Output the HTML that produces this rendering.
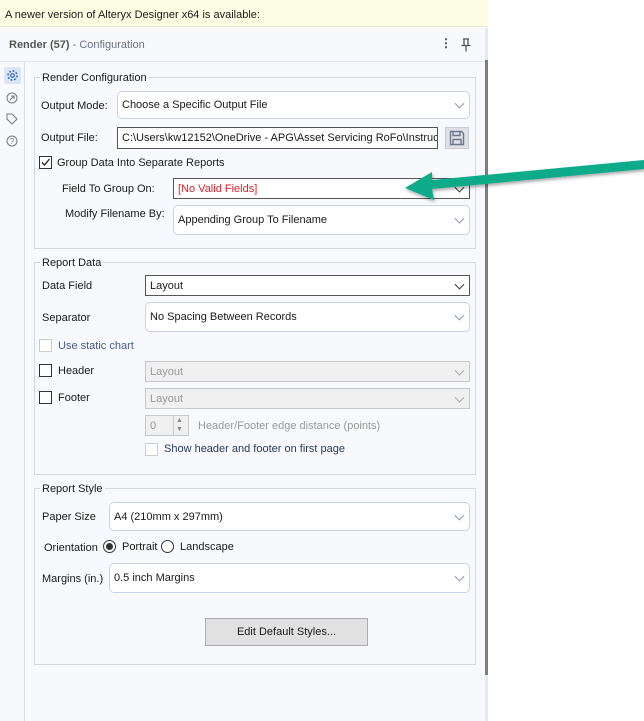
<!DOCTYPE html>
<html><head><style>
*{box-sizing:border-box;margin:0;padding:0}
body{width:644px;height:721px;overflow:hidden;background:#fff;font-family:"Liberation Sans",sans-serif;font-size:11px;color:#1a1a1a;position:relative}
.a{position:absolute}
.t{position:absolute;white-space:nowrap;line-height:14px}
.dd{position:absolute;background:#fff;border:1px solid #c9d2e6;border-radius:5px}
.dk{position:absolute;background:#fff;border:1px solid #555}
.dis{position:absolute;background:#f0f0f0;border:1px solid #c8c8c8}
.dd span,.dk span,.dis span{position:absolute;left:4px;top:50%;transform:translateY(-50%);white-space:nowrap}
.chev{position:absolute;right:6px;top:50%;width:7px;height:7px;border-right:1.3px solid #8a94b0;border-bottom:1.3px solid #8a94b0;transform:translateY(-70%) rotate(45deg)}
.dk .chev{border-color:#333}
.dis .chev{border-color:#aaa}
.grp{position:absolute;border:1px solid #d6d9de}
.lg{position:absolute;background:#f7f9fc;padding:0 2px;line-height:14px}
.cb{position:absolute;width:13px;height:13px;border:1px solid #333;background:#fff}
.cbd{border-color:#ccc}
</style></head><body>
<div class="a" style="left:0;top:0;width:488px;height:27px;background:#fdfde3;border-bottom:1px solid #ecebd0"></div>
<div class="t" style="left:5px;top:8px">A newer version of Alteryx Designer x64 is available:</div>
<div class="a" style="left:0;top:28px;width:485px;height:693px;background:#f7f9fc"></div>
<div class="a" style="left:0;top:61px;width:485px;height:1px;background:#e3e7ee"></div>
<div class="a" style="left:24px;top:62px;width:1px;height:659px;background:#d8dfee"></div>
<div class="a" style="left:485px;top:28px;width:3px;height:693px;background:#e3e8f2"></div>
<div class="a" style="left:485px;top:60px;width:3px;height:615px;background:#7d7d7d"></div>
<div class="t" style="left:9px;top:38px;font-size:11px;color:#555"><b style="color:#555">Render (57)</b> <span style="color:#6a7284">- Configuration</span></div>
<div class="t" style="left:440px;top:36px;font-weight:bold;color:#444;font-size:12px">⋮</div>
<svg class="a" style="left:460px;top:38px" width="12" height="14" viewBox="0 0 12 14"><path d="M3 1h6M4 1v6M8 1v6M1.5 7.5h9M6 7.5v6" stroke="#555" stroke-width="1.3" fill="none"/></svg>
<div class="a" style="left:4px;top:67px;width:17px;height:17px;background:#dde5f5;border-radius:2px"></div>
<svg class="a" style="left:6px;top:69px" width="13" height="13" viewBox="0 0 13 13"><circle cx="6.5" cy="6.5" r="4.5" fill="none" stroke="#2f6fd0" stroke-width="1.5" stroke-dasharray="2 1.5"/><circle cx="6.5" cy="6.5" r="1.8" fill="none" stroke="#2f6fd0" stroke-width="1.2"/></svg>
<svg class="a" style="left:6px;top:92px" width="12" height="12" viewBox="0 0 12 12"><circle cx="6" cy="6" r="5" fill="none" stroke="#777" stroke-width="1"/><path d="M4 8l4-4M5 4h3v3" stroke="#777" fill="none"/></svg>
<svg class="a" style="left:6px;top:113px" width="12" height="12" viewBox="0 0 12 12"><path d="M1 1h5l5 5-5 5-5-5z" fill="none" stroke="#777"/></svg>
<svg class="a" style="left:6px;top:135px" width="12" height="12" viewBox="0 0 12 12"><circle cx="6" cy="6" r="5" fill="none" stroke="#777"/><text x="6" y="9" font-size="8" text-anchor="middle" fill="#777" font-family="Liberation Sans">?</text></svg>

<!-- group 1 -->
<div class="grp" style="left:34px;top:77px;width:442px;height:172px"></div>
<div class="lg" style="left:40px;top:71px">Render Configuration</div>
<div class="t" style="left:41px;top:99px">Output Mode:</div>
<div class="dd" style="left:117px;top:91px;width:353px;height:28px"><span>Choose a Specific Output File</span><i class="chev"></i></div>
<div class="t" style="left:41px;top:131px">Output File:</div>
<div class="dk" style="left:117px;top:127px;width:321px;height:22px;overflow:hidden"><span>C:\Users\kw12152\OneDrive - APG\Asset Servicing RoFo\Instructions</span></div>
<div class="a" style="left:445px;top:127px;width:24px;height:22px;background:#dfe1e5;border:1px solid #c8ccd3"></div>
<svg class="a" style="left:449px;top:130px" width="16" height="16" viewBox="0 0 16 16"><path d="M1.5 1.5h11l2 2v11h-13z M4 1.5v4h7v-4 M4 14.5v-5h8v5" fill="none" stroke="#6b7890" stroke-width="1.4"/></svg>
<div class="cb" style="left:39px;top:156px"></div>
<svg class="a" style="left:40px;top:157px" width="11" height="11"><path d="M2 5.5l2.5 2.5 5-6" stroke="#222" stroke-width="1.3" fill="none"/></svg>
<div class="t" style="left:57px;top:156px">Group Data Into Separate Reports</div>
<div class="t" style="left:62px;top:182px">Field To Group On:</div>
<div class="dk" style="left:173px;top:178px;width:297px;height:21px"><span style="color:#e0202a">[No Valid Fields]</span><i class="chev"></i></div>
<div class="t" style="left:65px;top:207px">Modify Filename By:</div>
<div class="dd" style="left:173px;top:205px;width:297px;height:30px"><span>Appending Group To Filename</span><i class="chev"></i></div>

<!-- group 2 -->
<div class="grp" style="left:34px;top:262px;width:442px;height:213px"></div>
<div class="lg" style="left:40px;top:256px">Report Data</div>
<div class="t" style="left:42px;top:279px">Data Field</div>
<div class="dk" style="left:145px;top:275px;width:325px;height:21px"><span>Layout</span><i class="chev"></i></div>
<div class="t" style="left:42px;top:311px">Separator</div>
<div class="dd" style="left:145px;top:302px;width:325px;height:30px"><span>No Spacing Between Records</span><i class="chev"></i></div>
<div class="cb cbd" style="left:39px;top:339px"></div>
<div class="t" style="left:58px;top:339px;color:#4a5a8a">Use static chart</div>
<div class="cb" style="left:39px;top:364px"></div>
<div class="t" style="left:58px;top:364px">Header</div>
<div class="dis" style="left:145px;top:361px;width:325px;height:21px"><span style="color:#999">Layout</span><i class="chev"></i></div>
<div class="cb" style="left:39px;top:391px"></div>
<div class="t" style="left:58px;top:391px">Footer</div>
<div class="dis" style="left:145px;top:388px;width:325px;height:21px"><span style="color:#999">Layout</span><i class="chev"></i></div>
<div class="dis" style="left:145px;top:415px;width:44px;height:21px"><span style="color:#999">0</span></div>
<div class="a" style="left:173px;top:416px;width:1px;height:19px;background:#ccc"></div>
<div class="t" style="left:176px;top:414px;font-size:7px;color:#888">▲</div>
<div class="t" style="left:176px;top:423px;font-size:7px;color:#888">▼</div>
<div class="t" style="left:198px;top:419px;color:#999">Header/Footer edge distance (points)</div>
<div class="cb cbd" style="left:145px;top:443px"></div>
<div class="t" style="left:164px;top:442px;color:#2a3a5a">Show header and footer on first page</div>

<!-- group 3 -->
<div class="grp" style="left:34px;top:488px;width:442px;height:177px"></div>
<div class="lg" style="left:40px;top:482px">Report Style</div>
<div class="t" style="left:42px;top:510px">Paper Size</div>
<div class="dd" style="left:109px;top:502px;width:361px;height:29px"><span>A4 (210mm x 297mm)</span><i class="chev"></i></div>
<div class="t" style="left:44px;top:541px">Orientation</div>
<div class="a" style="left:103px;top:540px;width:13px;height:13px;border:1px solid #333;border-radius:50%;background:#fff"></div>
<div class="a" style="left:106px;top:543px;width:7px;height:7px;border-radius:50%;background:#333"></div>
<div class="t" style="left:122px;top:540px">Portrait</div>
<div class="a" style="left:161px;top:540px;width:13px;height:13px;border:1px solid #333;border-radius:50%;background:#fff"></div>
<div class="t" style="left:180px;top:540px">Landscape</div>
<div class="t" style="left:42px;top:572px">Margins (in.)</div>
<div class="dd" style="left:109px;top:563px;width:361px;height:30px"><span>0.5 inch Margins</span><i class="chev"></i></div>
<div class="a" style="left:205px;top:618px;width:163px;height:28px;background:#e1e1e1;border:1px solid #adadad"></div>
<div class="t" style="left:205px;top:625px;width:163px;text-align:center">Edit Default Styles...</div>

<!-- arrow -->
<svg class="a" style="left:0;top:0" width="644" height="721"><defs><filter id="s"><feDropShadow dx="1" dy="2" stdDeviation="1.5" flood-opacity="0.35"/></filter></defs>
<g filter="url(#s)" fill="#0aab8a"><path d="M644 160 L644 169 L432 189 L434 200 L405 188 L432 172 L432 180 Z"/></g></svg>
</body></html>
